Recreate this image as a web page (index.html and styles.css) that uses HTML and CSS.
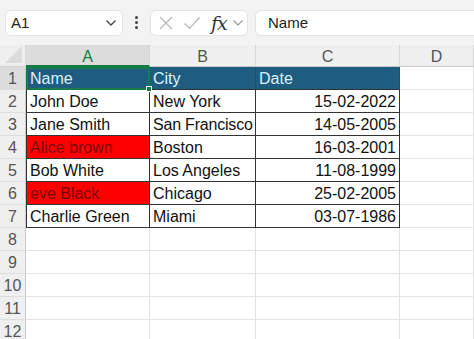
FILE: index.html
```html
<!DOCTYPE html>
<html lang="en">

<head>
    <meta charset="UTF-8">
    <title>Sheet</title>
    <link rel="stylesheet" href="styles.css">
</head>

<body>
    <div class="toolbar">
        <div class="namebox">
            <span>A1</span>
            <svg class="chev" width="12" height="8" viewBox="0 0 12 8"><path d="M1.5 1.5 L6 6 L10.5 1.5" fill="none" stroke="#444" stroke-width="1.3"/></svg>
        </div>
        <div class="dots"><i></i><i></i><i></i></div>
        <div class="fbox">
            <svg width="16" height="16" viewBox="0 0 16 16"><path d="M2 2 L14 14 M14 2 L2 14" stroke="#b5b5b5" stroke-width="1.2"/></svg>
            <svg width="18" height="16" viewBox="0 0 18 16"><path d="M1.5 8.5 L6.5 13.5 L16.5 2.5" fill="none" stroke="#b5b5b5" stroke-width="1.2"/></svg>
            <span class="fx">fx</span>
            <svg class="chev2" width="12" height="8" viewBox="0 0 12 8"><path d="M1.5 1.5 L6 6 L10.5 1.5" fill="none" stroke="#9a9a9a" stroke-width="1.2"/></svg>
        </div>
        <div class="formula">Name</div>
    </div>

    <div class="sheet">
        <div class="corner"><span class="tri"></span></div>
        <div class="colh sel">A</div>
        <div class="colh">B</div>
        <div class="colh">C</div>
        <div class="colh">D</div>

        <div class="rowh selrow">1</div>
        <div class="cell t hd first active">Name<span class="handle"></span></div>
        <div class="cell t hd">City</div>
        <div class="cell t hd">Date</div>
        <div class="cell"></div>

        <div class="rowh">2</div>
        <div class="cell t first">John Doe</div>
        <div class="cell t">New York</div>
        <div class="cell t num">15-02-2022</div>
        <div class="cell"></div>

        <div class="rowh">3</div>
        <div class="cell t first">Jane Smith</div>
        <div class="cell t tight">San Francisco</div>
        <div class="cell t num">14-05-2005</div>
        <div class="cell"></div>

        <div class="rowh">4</div>
        <div class="cell t first red">Alice brown</div>
        <div class="cell t">Boston</div>
        <div class="cell t num">16-03-2001</div>
        <div class="cell"></div>

        <div class="rowh">5</div>
        <div class="cell t first">Bob White</div>
        <div class="cell t">Los Angeles</div>
        <div class="cell t num">11-08-1999</div>
        <div class="cell"></div>

        <div class="rowh">6</div>
        <div class="cell t first red">eve Black</div>
        <div class="cell t">Chicago</div>
        <div class="cell t num">25-02-2005</div>
        <div class="cell"></div>

        <div class="rowh">7</div>
        <div class="cell t first">Charlie Green</div>
        <div class="cell t">Miami</div>
        <div class="cell t num">03-07-1986</div>
        <div class="cell"></div>

        <div class="rowh">8</div>
        <div class="cell"></div><div class="cell"></div><div class="cell"></div><div class="cell"></div>
        <div class="rowh">9</div>
        <div class="cell"></div><div class="cell"></div><div class="cell"></div><div class="cell"></div>
        <div class="rowh">10</div>
        <div class="cell"></div><div class="cell"></div><div class="cell"></div><div class="cell"></div>
        <div class="rowh">11</div>
        <div class="cell"></div><div class="cell"></div><div class="cell"></div><div class="cell"></div>
        <div class="rowh">12</div>
        <div class="cell"></div><div class="cell"></div><div class="cell"></div><div class="cell"></div>
    </div>
</body>

</html>
```

FILE: styles.css
```css
* {
    margin: 0;
    padding: 0;
    box-sizing: border-box;
}

body {
    font-family: "Liberation Sans", Arial, sans-serif;
    background: #ffffff;
    color: #111;
    width: 474px;
    height: 339px;
    overflow: hidden;
}

/* formula bar */
.toolbar {
    height: 45px;
    background: #f3f3f3;
    display: flex;
    align-items: center;
    padding: 0 0 0 5px;
}

.namebox,
.fbox,
.formula {
    height: 26px;
    background: #fff;
    border: 1px solid #e4e4e4;
    border-radius: 6px;
    display: flex;
    align-items: center;
    font-size: 15px;
}

.namebox {
    width: 118px;
    padding: 0 5px 0 5px;
    justify-content: space-between;
    color: #222;
}

.dots {
    width: 27px;
    display: flex;
    flex-direction: column;
    align-items: center;
    gap: 2px;
}

.dots i {
    width: 3px;
    height: 3px;
    border-radius: 50%;
    background: #444;
}

.fbox {
    width: 98px;
    padding: 0 0 0 7px;
    gap: 9px;
    color: #555;
}

.fx {
    font-family: "DejaVu Serif", "Liberation Serif", serif;
    font-style: italic;
    font-size: 19px;
    color: #333;
    margin-left: 1px;
    letter-spacing: -1px;
}

.chev2 {
    margin-left: -4px;
}

.formula {
    flex: 1;
    margin-left: 7px;
    border-right: none;
    border-radius: 6px 0 0 6px;
    padding-left: 12px;
    color: #222;
}

/* grid */
.sheet {
    display: grid;
    grid-template-columns: 26px 124px 106px 144px 74px;
    grid-template-rows: 22px repeat(12, 23px);
    font-size: 16px;
}

.corner {
    background: #efefef;
    border-right: 1px solid #d8d8d8;
    border-bottom: 1px solid #d0d0d0;
    position: relative;
}

.tri {
    position: absolute;
    right: 3px;
    bottom: 3px;
    width: 0;
    height: 0;
    border-left: 17px solid transparent;
    border-bottom: 17px solid #dcdcdc;
}

.colh {
    background: #efefef;
    border-right: 1px solid #d8d8d8;
    border-bottom: 1px solid #c8c8c8;
    display: flex;
    align-items: center;
    justify-content: center;
    color: #555;
    padding-top: 3px;
}

.colh.sel {
    background: #dcdcdc;
    color: #107c41;
    border-bottom: 2px solid #107c41;
}

.rowh {
    background: #efefef;
    border-right: 1px solid #c8c8c8;
    border-bottom: 1px solid #dedede;
    display: flex;
    align-items: flex-end;
    justify-content: center;
    color: #555;
    padding-bottom: 1px;
}

.rowh.selrow {
    background: #dcdcdc;
}

.cell {
    border-right: 1px solid #e2e2e2;
    border-bottom: 1px solid #e2e2e2;
    display: flex;
    align-items: flex-end;
    padding: 0 3px 1px 3px;
    white-space: nowrap;
    overflow: visible;
    position: relative;
}

.cell.tight {
    letter-spacing: -0.2px;
}

.cell.t {
    border-right-color: #333;
    border-bottom-color: #333;
}

.cell.first {
    border-left: 1px solid #333;
}

.cell.hd {
    background: #1f5d80;
    color: #dcf0fa;
    border-right-color: #1b4e6b;
}

.cell.num {
    justify-content: flex-end;
}

.cell.red {
    background: #ff0000;
    color: #7a0000;
}

.cell.active {
    border: 1px solid #107c41;
    box-shadow: inset 0 0 0 1px #1f7a52;
}

.handle {
    position: absolute;
    right: -3px;
    bottom: -3px;
    width: 6px;
    height: 6px;
    background: #107c41;
    border: 1px solid #fff;
    z-index: 2;
}
```
